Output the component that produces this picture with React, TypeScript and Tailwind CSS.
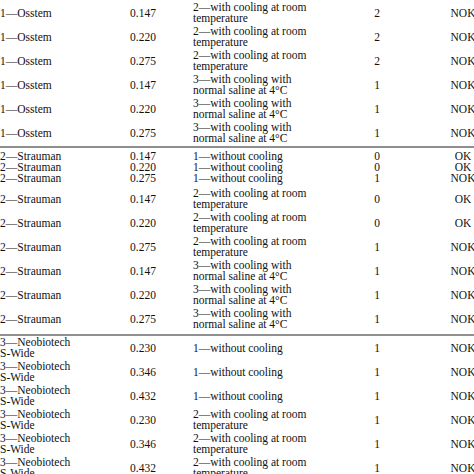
import React from "react";

type Row = { a: string[]; b: string; c: string[]; d: string; e: string };

const roomT = ["2—with cooling at room", "temperature"];
const saline = ["3—with cooling with", "normal saline at 4°C"];
const noCool = ["1—without cooling"];

const osstem: Row[] = [
  { a: ["1—Osstem"], b: "0.147", c: roomT, d: "2", e: "NOK" },
  { a: ["1—Osstem"], b: "0.220", c: roomT, d: "2", e: "NOK" },
  { a: ["1—Osstem"], b: "0.275", c: roomT, d: "2", e: "NOK" },
  { a: ["1—Osstem"], b: "0.147", c: saline, d: "1", e: "NOK" },
  { a: ["1—Osstem"], b: "0.220", c: saline, d: "1", e: "NOK" },
  { a: ["1—Osstem"], b: "0.275", c: saline, d: "1", e: "NOK" },
];

const straumanSingle: Row[] = [
  { a: ["2—Strauman"], b: "0.147", c: noCool, d: "0", e: "OK" },
  { a: ["2—Strauman"], b: "0.220", c: noCool, d: "0", e: "OK" },
  { a: ["2—Strauman"], b: "0.275", c: noCool, d: "1", e: "NOK" },
];

const straumanDouble: Row[] = [
  { a: ["2—Strauman"], b: "0.147", c: roomT, d: "0", e: "OK" },
  { a: ["2—Strauman"], b: "0.220", c: roomT, d: "0", e: "OK" },
  { a: ["2—Strauman"], b: "0.275", c: roomT, d: "1", e: "NOK" },
  { a: ["2—Strauman"], b: "0.147", c: saline, d: "1", e: "NOK" },
  { a: ["2—Strauman"], b: "0.220", c: saline, d: "1", e: "NOK" },
  { a: ["2—Strauman"], b: "0.275", c: saline, d: "1", e: "NOK" },
];

const neo = ["3—Neobiotech", "S-Wide"];
const neobiotech: Row[] = [
  { a: neo, b: "0.230", c: noCool, d: "1", e: "NOK" },
  { a: neo, b: "0.346", c: noCool, d: "1", e: "NOK" },
  { a: neo, b: "0.432", c: noCool, d: "1", e: "NOK" },
  { a: neo, b: "0.230", c: roomT, d: "1", e: "NOK" },
  { a: neo, b: "0.346", c: roomT, d: "1", e: "NOK" },
  { a: neo, b: "0.432", c: roomT, d: "1", e: "NOK" },
];

function Lines({ lines }: { lines: string[] }) {
  return (
    <div className="flex flex-col">
      {lines.map((l, i) => (
        <span key={i} className="whitespace-nowrap">
          {l}
        </span>
      ))}
    </div>
  );
}

function TableRow({ row, tall }: { row: Row; tall: boolean }) {
  return (
    <div
      className={`grid grid-cols-[130px_63px_150px_68px_104px] items-center ${
        tall ? "h-[24px]" : "h-[11px]"
      }`}
    >
      <div>
        <Lines lines={row.a} />
      </div>
      <div className="whitespace-nowrap">{row.b}</div>
      <div>
        <Lines lines={row.c} />
      </div>
      <div className="text-center">{row.d}</div>
      <div className="text-center">{row.e}</div>
    </div>
  );
}

export default function App() {
  return (
    <div
      className="w-[474px] h-[474px] overflow-hidden bg-white text-[#111111] text-[11.5px] leading-[11px]"
      style={{ fontFamily: '"Liberation Serif", "Times New Roman", serif' }}
    >
      <div className="w-[515px] flex flex-col pt-[1px]">
        {osstem.map((r, i) => (
          <TableRow key={`o${i}`} row={r} tall />
        ))}
        <div className="h-[2px] bg-[#8f8f8f] mt-[1px]" />
        <div className="pt-[3px] flex flex-col">
          {straumanSingle.map((r, i) => (
            <TableRow key={`s${i}`} row={r} tall={false} />
          ))}
        </div>
        <div className="pt-[3px] flex flex-col">
          {straumanDouble.map((r, i) => (
            <TableRow key={`d${i}`} row={r} tall />
          ))}
        </div>
        <div className="h-[2px] bg-[#8f8f8f] mt-[3px]" />
        <div className="flex flex-col">
          {neobiotech.map((r, i) => (
            <TableRow key={`n${i}`} row={r} tall />
          ))}
        </div>
      </div>
    </div>
  );
}
